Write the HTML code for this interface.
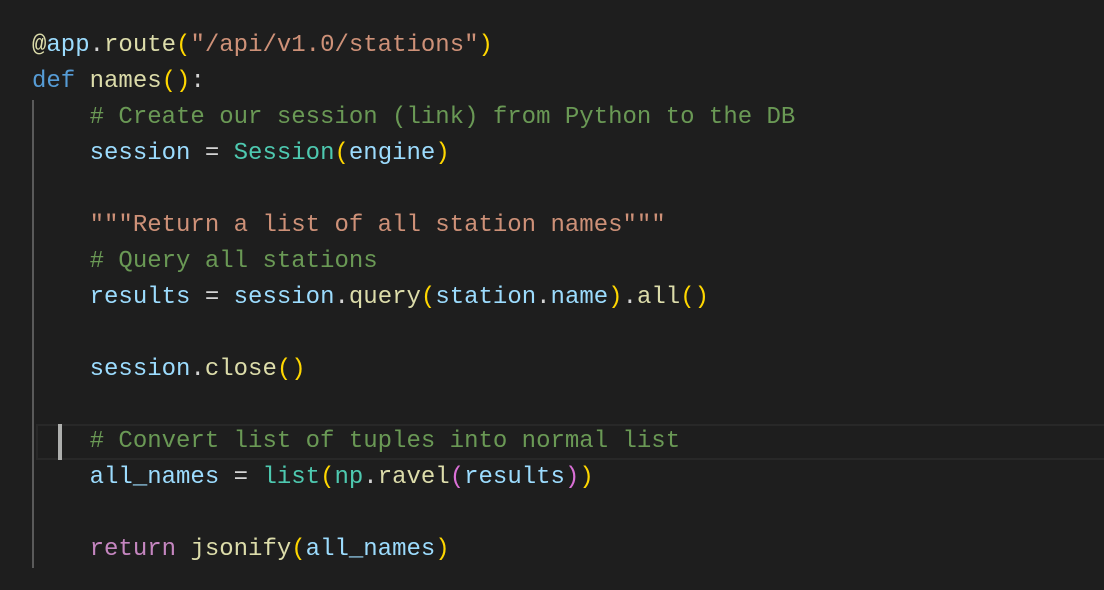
<!DOCTYPE html>
<html><head><meta charset="utf-8"><style>
html,body{margin:0;padding:0;background:#1e1e1e;width:1104px;height:590px;overflow:hidden}
.l{position:absolute;left:32px;height:36px;line-height:36px;font-family:"Liberation Mono",monospace;font-size:24px;color:#d4d4d4;white-space:pre}
.c{color:#6a9955}.s{color:#ce9178}.v{color:#9cdcfe}.f{color:#dcdcaa}.t{color:#4ec9b0}.k{color:#569cd6}.r{color:#c586c0}.y{color:#ffd700}.p{color:#da70d6}
</style></head><body>
<div style="position:absolute;left:36px;top:424px;width:1068px;height:32px;border:2px solid #282828;border-right:none"></div>
<div style="position:absolute;left:32px;top:100px;width:2px;height:468px;background:#5a5a5a"></div>
<div style="position:absolute;left:58px;top:424px;width:4px;height:36px;background:#aeafad"></div>
<div class="l" style="top:28px"><span class="f">@</span><span class="v">app</span>.<span class="f">route</span><span class="y">(</span><span class="s">"/api/v1.0/stations"</span><span class="y">)</span></div>
<div class="l" style="top:64px"><span class="k">def</span> <span class="f">names</span><span class="y">()</span>:</div>
<div class="l" style="top:100px">    <span class="c"># Create our session (link) from Python to the DB</span></div>
<div class="l" style="top:136px">    <span class="v">session</span> = <span class="t">Session</span><span class="y">(</span><span class="v">engine</span><span class="y">)</span></div>
<div class="l" style="top:208px">    <span class="s">"""Return a list of all station names"""</span></div>
<div class="l" style="top:244px">    <span class="c"># Query all stations</span></div>
<div class="l" style="top:280px">    <span class="v">results</span> = <span class="v">session</span>.<span class="f">query</span><span class="y">(</span><span class="v">station</span>.<span class="v">name</span><span class="y">)</span>.<span class="f">all</span><span class="y">()</span></div>
<div class="l" style="top:352px">    <span class="v">session</span>.<span class="f">close</span><span class="y">()</span></div>
<div class="l" style="top:424px">    <span class="c"># Convert list of tuples into normal list</span></div>
<div class="l" style="top:460px">    <span class="v">all_names</span> = <span class="t">list</span><span class="y">(</span><span class="t">np</span>.<span class="f">ravel</span><span class="p">(</span><span class="v">results</span><span class="p">)</span><span class="y">)</span></div>
<div class="l" style="top:532px">    <span class="r">return</span> <span class="f">jsonify</span><span class="y">(</span><span class="v">all_names</span><span class="y">)</span></div>
</body></html>
